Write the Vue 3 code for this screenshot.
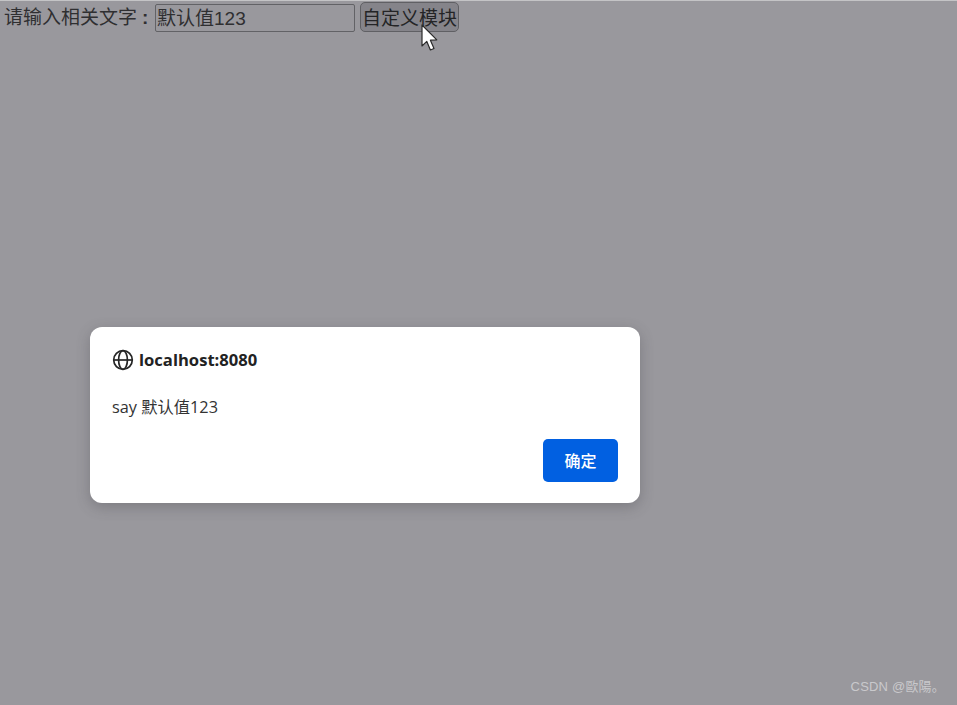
<script setup>
const value = '默认值123'
</script>

<template>
  <div class="page">
    <div class="toolbar">
      <span class="label">请输入相关文字<span class="colon">:</span></span>
      <input class="field" :value="value" readonly />
      <button class="custom">自定义模块</button>
    </div>
    <svg class="cursor" width="20" height="28" viewBox="0 0 20 28">
      <path d="M2 1 L2 22 L6.8 17.4 L10.4 26 L14 24.5 L10.4 16.2 L16.8 15.8 Z" fill="#fff" stroke="#2a2a2a" stroke-width="1.2" stroke-linejoin="round" />
    </svg>
    <div class="dialog">
      <div class="title">
        <svg class="globe" width="22" height="22" viewBox="0 0 22 22" fill="none" stroke="#262626" stroke-width="1.7">
          <circle cx="11" cy="11" r="9.3" />
          <ellipse cx="11" cy="11" rx="4.4" ry="9.3" />
          <path d="M1.7 11 H20.3" />
        </svg>
        <span class="host">localhost:8080</span>
      </div>
      <div class="message">say 默认值123</div>
      <div class="actions">
        <button class="ok">确定</button>
      </div>
    </div>
    <div class="watermark">CSDN @歐陽。</div>
  </div>
</template>

<style scoped>
.page {
  position: relative;
  width: 957px;
  height: 705px;
  overflow: hidden;
  background: #99989d;
  border-top: 1px solid #c4c4c6;
  box-sizing: border-box;
  font-family: "Liberation Sans", "Noto Sans CJK SC", sans-serif;
}
.toolbar {
  display: flex;
  align-items: flex-start;
  padding: 1px 0 0 4px;
  color: #2f2f31;
  font-size: 19px;
}
.label {
  width: 151px;
  line-height: 32px;
  white-space: nowrap;
}
.colon {
  display: inline-block;
  margin-left: 5px;
  line-height: 28px;
  font-weight: 700;
}
.field {
  width: 200px;
  height: 28px;
  margin-top: 2px;
  padding: 0 1px 4px;
  box-sizing: border-box;
  border: 1px solid #626266;
  border-radius: 2px;
  background: #99989d;
  color: #2f2f31;
  font: inherit;
  outline: none;
}
.custom {
  width: 99px;
  height: 30px;
  margin-left: 5px;
  padding: 0 0 2px;
  box-sizing: border-box;
  border: 1px solid #606064;
  border-radius: 5px;
  background: #85848a;
  color: #242426;
  font: inherit;
  white-space: nowrap;
}
.cursor {
  position: absolute;
  left: 420px;
  top: 23px;
}
.dialog {
  position: absolute;
  left: 90px;
  top: 326px;
  width: 550px;
  height: 176px;
  box-sizing: border-box;
  padding: 22px 22px 21px;
  display: flex;
  flex-direction: column;
  background: #fff;
  border-radius: 12px;
  box-shadow: 0 4px 14px rgba(60, 60, 65, 0.3);
  color: #2b2b2b;
}
.title {
  display: flex;
  align-items: center;
  gap: 5px;
  height: 22px;
}
.host {
  margin-top: -2px;
  font-family: "Open Sans", "Noto Sans", sans-serif;
  font-weight: 700;
  font-size: 16.6px;
  color: #222;
}
.message {
  margin-top: 25px;
  font-family: "Open Sans", "Noto Sans CJK SC", sans-serif;
  font-size: 16.3px;
  line-height: 22px;
  color: #333;
}
.actions {
  margin-top: auto;
  display: flex;
  justify-content: flex-end;
}
.ok {
  width: 75px;
  height: 43px;
  padding: 0 0 2px;
  border: none;
  border-radius: 5px;
  background: #0160e1;
  color: #fff;
  font-family: "Noto Sans CJK SC", sans-serif;
  font-size: 16px;
  font-weight: 500;
}
.watermark {
  position: absolute;
  right: 12px;
  bottom: 10px;
  color: #c9c9cc;
  font-size: 13px;
  letter-spacing: 0.2px;
  white-space: nowrap;
}
</style>
